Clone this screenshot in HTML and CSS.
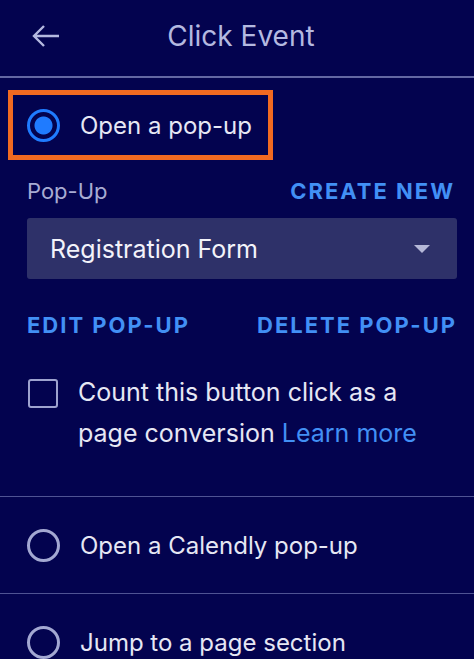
FILE: index.html
```html
<!DOCTYPE html>
<html>
<head>
    <title>Click Event</title>
    <link rel="stylesheet" href="styles.css">
</head>
<body>
    <div class="panel">
        <div class="header">
            <button class="back" aria-label="Back">
                <svg width="28" height="24" viewBox="0 0 28 24"><path d="M27 12H3M12 2L2 12l10 10" fill="none" stroke="#b4b9e0" stroke-width="2.4"/></svg>
            </button>
            <h1>Click Event</h1>
        </div>

        <div class="section">
            <div class="highlight">
                <label class="option">
                    <span class="radio checked"></span>
                    <span>Open a pop-up</span>
                </label>
            </div>

            <div class="field-head">
                <span class="field-label">Pop-Up</span>
                <a class="action" href="#">CREATE NEW</a>
            </div>
            <div class="select">
                <span>Registration Form</span>
                <span class="caret"></span>
            </div>

            <div class="actions">
                <a class="action" href="#">EDIT POP-UP</a>
                <a class="action" href="#">DELETE POP-UP</a>
            </div>

            <label class="check-row">
                <span class="checkbox"></span>
                <span>Count this button click as a page conversion <a class="link" href="#">Learn more</a></span>
            </label>
        </div>

        <label class="option row">
            <span class="radio"></span>
            <span>Open a Calendly pop-up</span>
        </label>
        <label class="option row">
            <span class="radio"></span>
            <span>Jump to a page section</span>
        </label>
    </div>
</body>
</html>
```

FILE: styles.css
```css
body {
    margin: 0;
    background: #03034f;
    font-family: Inter, "Noto Sans", sans-serif;
    color: #e6e7f4;
    overflow: hidden;
}
.panel {
    width: 474px;
    height: 659px;
}
.header {
    position: relative;
    height: 76px;
    display: flex;
    align-items: center;
    justify-content: center;
    border-bottom: 2px solid #6367a3;
}
.back {
    position: absolute;
    left: 32px;
    top: 24px;
    background: none;
    border: none;
    padding: 0;
    display: flex;
}
h1 {
    margin: -4px 0 0 8px;
    font-size: 28px;
    font-weight: 400;
    color: #b4b9e0;
}
.section {
    padding: 12px 17px 0 27px;
    border-bottom: 1px solid #4f5393;
    height: 419px;
    box-sizing: border-box;
}
.highlight {
    display: flex;
    align-items: center;
    box-sizing: border-box;
    width: 265px;
    height: 70px;
    margin-left: -19px;
    border: 5px solid #f26a21;
    padding-left: 14px;
    white-space: nowrap;
}
.option {
    display: flex;
    align-items: center;
    gap: 20px;
    font-size: 24px;
}
.radio {
    width: 27px;
    height: 27px;
    border: 3.5px solid #a3a8d2;
    border-radius: 50%;
    flex: none;
    box-sizing: content-box;
}
.radio.checked {
    border-color: #1f7bff;
    background: radial-gradient(circle, #1f7bff 0 8.5px, transparent 9.5px);
}
.field-head {
    display: flex;
    justify-content: space-between;
    align-items: center;
    height: 26px;
    margin-top: 18px;
    margin-right: 2px;
}
.field-label {
    font-size: 22px;
    color: #a8acd3;
}
.action {
    font-size: 22px;
    font-weight: 700;
    letter-spacing: 2px;
    color: #4290f5;
    text-decoration: none;
}
.select {
    margin-top: 14px;
    height: 61px;
    background: #2e3169;
    border-radius: 3px;
    display: flex;
    align-items: center;
    justify-content: space-between;
    padding: 0 27px 0 23px;
    font-size: 25px;
    color: #f3f3fa;
}
.caret {
    border-left: 8px solid transparent;
    border-right: 8px solid transparent;
    border-top: 8px solid #b5b8d8;
}
.actions {
    display: flex;
    justify-content: space-between;
    height: 26px;
    align-items: center;
    margin-top: 33px;
    margin-right: 0;
}
.check-row {
    display: flex;
    gap: 20px;
    margin-top: 34px;
    font-size: 25px;
    line-height: 41px;
    padding-right: 20px;
}
.checkbox {
    width: 26px;
    height: 25px;
    border: 2.5px solid #9ea3cf;
    border-radius: 3px;
    margin: 7px 0 0 1px;
    flex: none;
}
.link {
    color: #4290f5;
    text-decoration: none;
}
.row {
    height: 97px;
    box-sizing: border-box;
    padding-left: 27px;
    border-bottom: 1px solid #4f5393;
}
```
